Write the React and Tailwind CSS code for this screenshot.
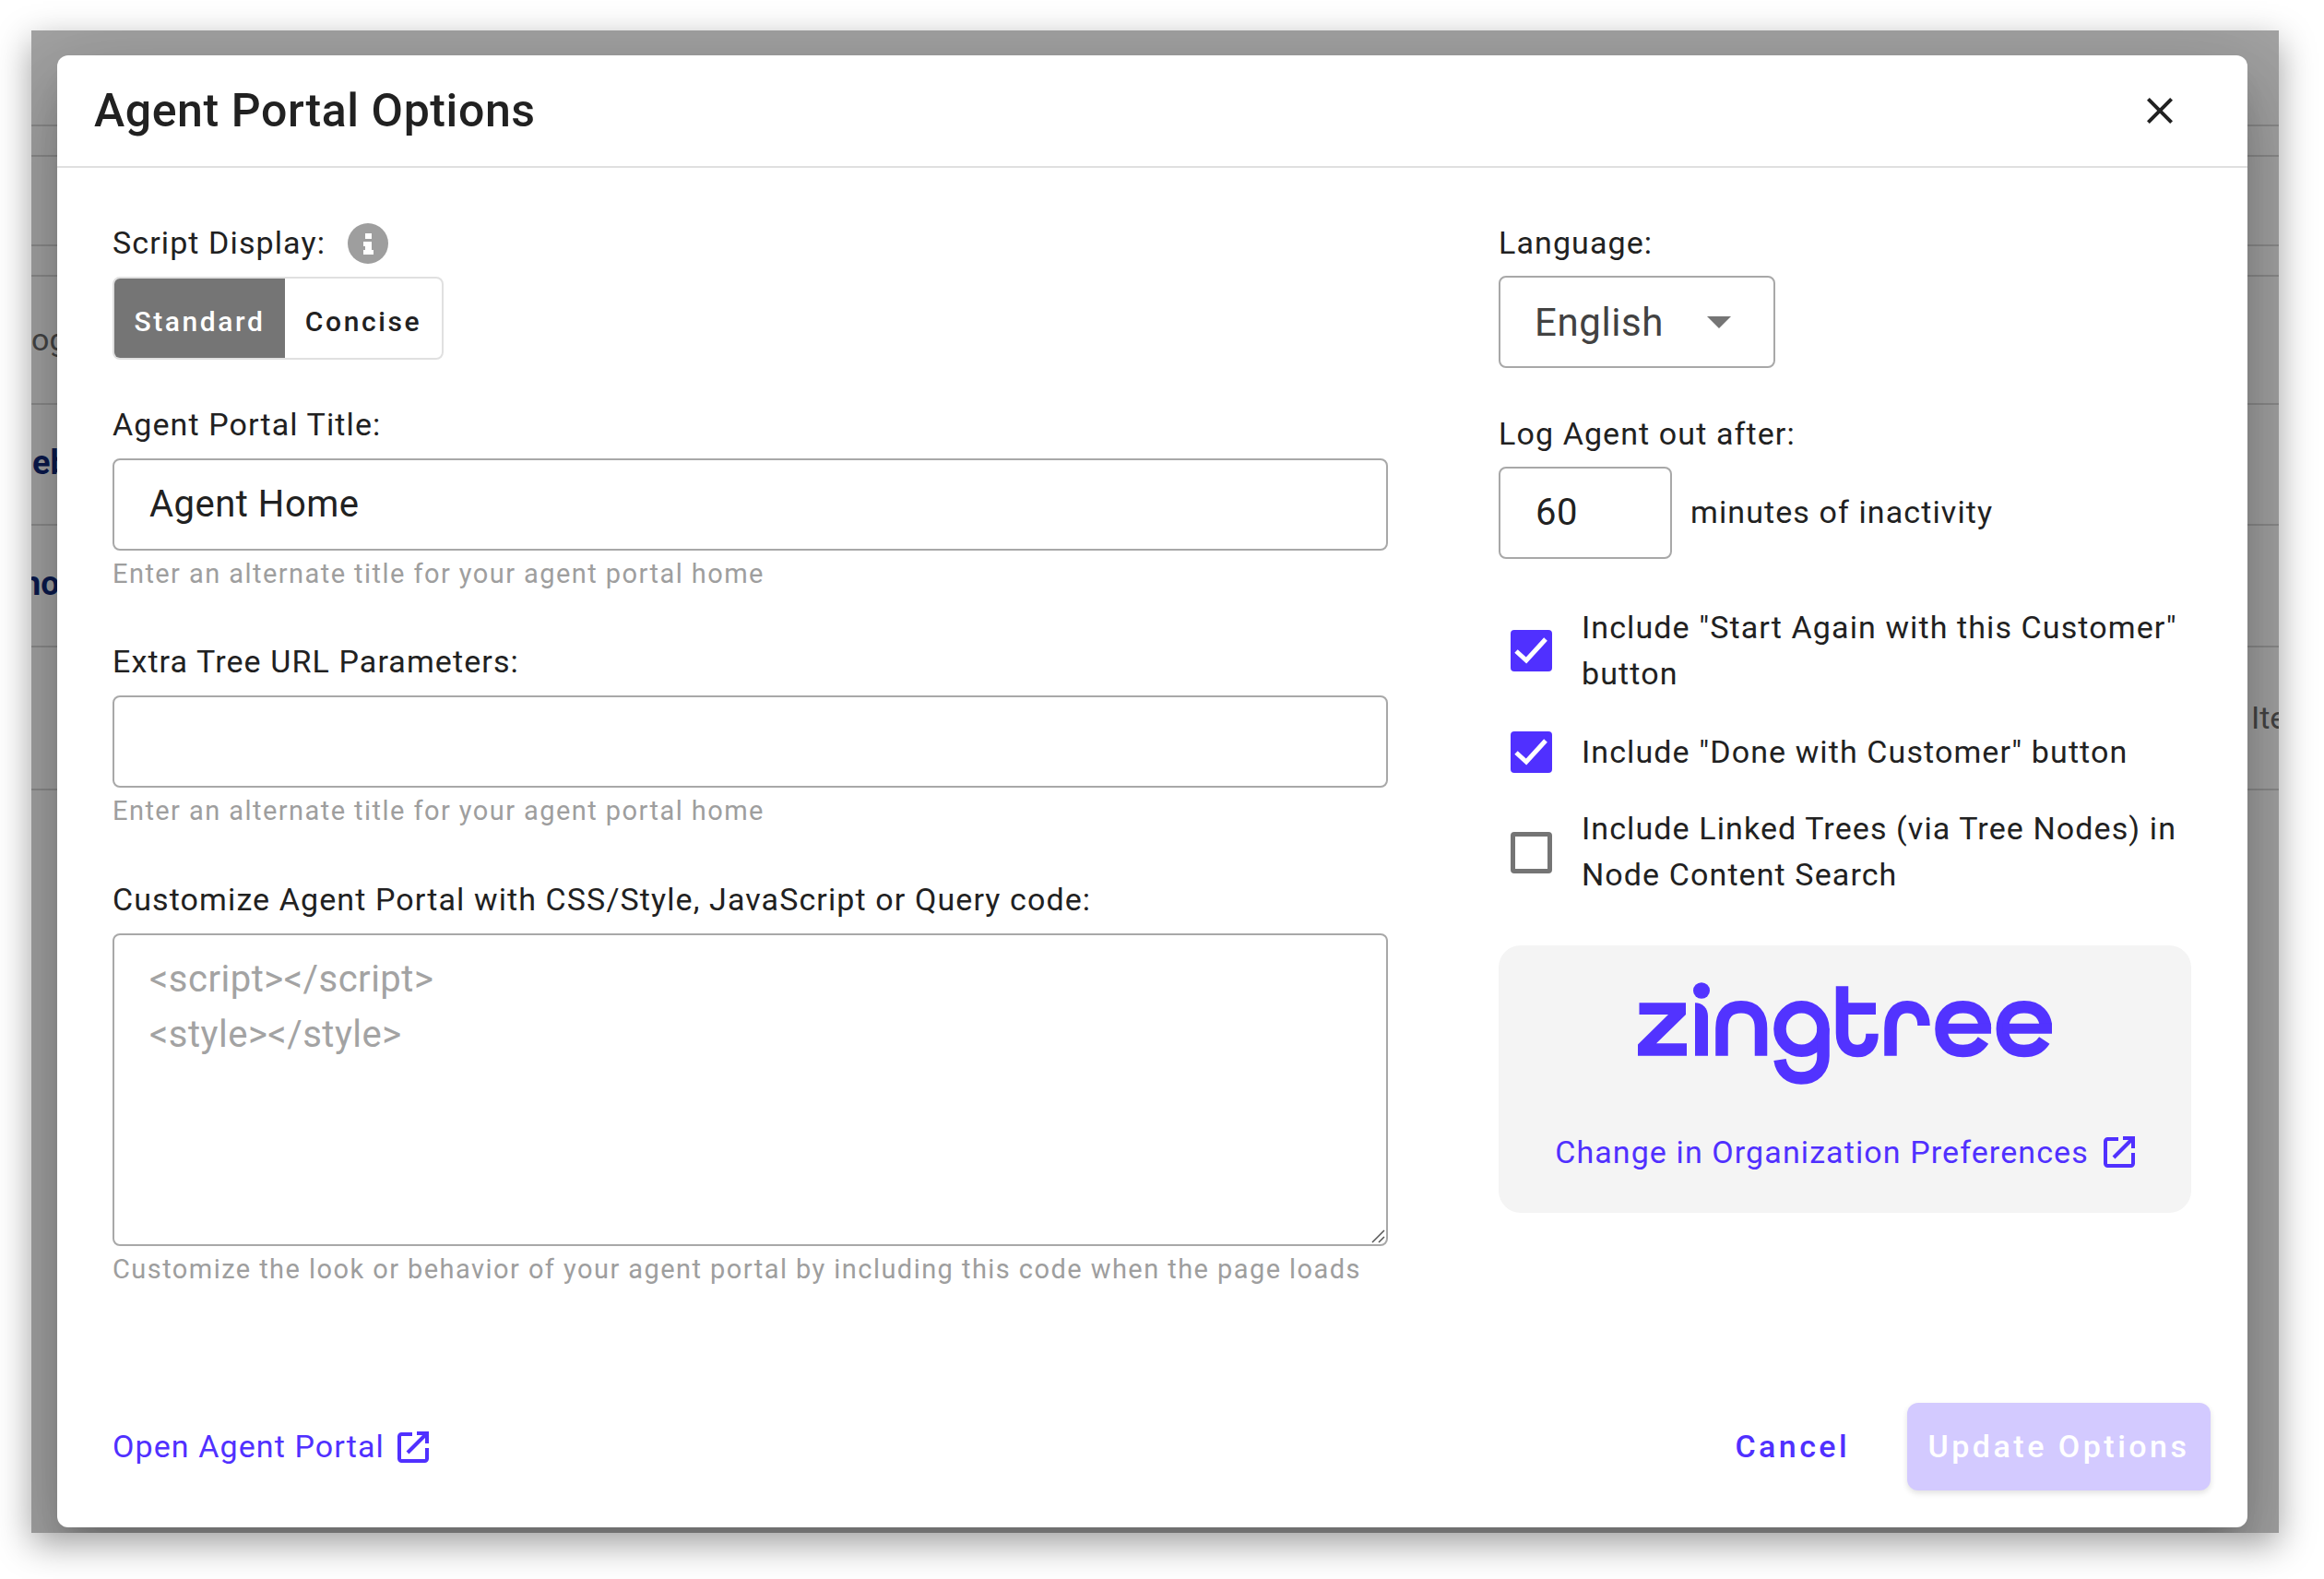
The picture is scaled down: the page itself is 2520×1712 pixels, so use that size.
import React from "react";

const ExternalIcon = () => (
  <svg width="34" height="34" viewBox="0 0 34 34" fill="none" stroke="#5030ff" strokeWidth="4" className="shrink-0">
    <path d="M16 3H4.500A2.500 2.500 0 0 0 2 5.500V29.500A2.500 2.500 0 0 0 4.500 32H29.500A2.500 2.500 0 0 0 32 29.500V18" />
    <path d="M11 23L31 3" />
    <path d="M21 2H32V13" />
  </svg>
);

const Check = ({ checked }) =>
  checked ? (
    <div className="w-[45px] h-[45px] rounded-[4px] bg-[#5030ff] flex items-center justify-center shrink-0">
      <svg width="45" height="45" viewBox="0 0 45 45" fill="none" stroke="#fff" strokeWidth="5">
        <path d="M6 23L17 33L38 10" />
      </svg>
    </div>
  ) : (
    <div className="w-[45px] h-[45px] mt-[2px] rounded-[4px] border-[5px] border-[#757575] bg-white shrink-0" />
  );

const Logo = () => (
  <svg width="449" height="111" viewBox="0 0 449 111" fill="none" stroke="#5233ff" strokeWidth="13.500">
    <path stroke="none" fill="#5233ff" d="M1.500 22.300H52V35L20 66.300H53V79.700H0V67.500L33 35H1.500Z" />
    <ellipse stroke="none" fill="#5233ff" cx="69" cy="9" rx="9" ry="8.800" />
    <path stroke="none" fill="#5233ff" d="M62 22.300C70 22.300 76 28 76 37V79.700H62Z" />
    <path d="M91 79.700V50C91 35 98 26.700 112 26.700C126 26.700 133.500 35 133.500 50V79.700" />
    <ellipse cx="177.500" cy="50.500" rx="23.500" ry="23.800" />
    <path d="M154 84C156 97 165 104 177 104C192 104 201 94 201 80V50" />
    <path d="M221.500 4.300V55C221.500 68 228 74.500 238 74.500C248 74.500 254 68 254 55.700" />
    <path stroke="none" fill="#5233ff" d="M221 22.300H258V35H221Z" />
    <path d="M274 79.700V50C274 34 282 26.700 292 26.700C303 26.700 310 34 310 47" />
    <path d="M329 50.500C329 36 338 26.700 352.500 26.700C367 26.700 376 36 376.500 50.500M329 50.500C329 65 338 74.500 352.500 74.500C362 74.500 370 70 374.500 63" />
    <path strokeWidth="11" d="M329 50.200H383" />
    <path d="M395.300 50.500C395.300 36 404.300 26.700 418.800 26.700C433.300 26.700 442.300 36 442.800 50.500M395.300 50.500C395.300 65 404.300 74.500 418.800 74.500C428.300 74.500 436.300 70 440.800 63" />
    <path strokeWidth="11" d="M395.300 50.200H449" />
  </svg>
);

const Label = ({ children }) => (
  <div className="h-[50px] leading-[48px] text-[34px] tracking-[1.1px] text-[#212121] whitespace-nowrap">{children}</div>
);
const Helper = ({ children }) => (
  <div className="h-[40px] leading-[40px] mt-[5px] text-[29px] tracking-[1.44px] text-[#9e9e9e] whitespace-nowrap">{children}</div>
);
const Field = ({ value, gap }) => (
  <div className={`${gap} h-[100px] w-full rounded-[8px] border-2 border-[#a8a8a8] px-[38px] flex items-center text-[40px] tracking-[0.5px] text-[#212121]`}>
    {value}
  </div>
);

const lines = ["top-[102px]", "top-[135px]", "top-[232px]", "top-[265px]", "top-[404px]", "top-[535px]", "top-[667px]", "top-[822px]"];

export default function App() {
  return (
    <div className="w-[2520px] h-[1712px] bg-white pl-[34px] pt-[33px] font-['Roboto',sans-serif] overflow-hidden">
      <div className="relative w-[2437px] h-[1629px] bg-[#a2a2a2] overflow-hidden shadow-[0_12px_36px_rgba(0,0,0,0.38)]">
        {lines.map((l) => (
          <div key={l} className={`absolute left-0 right-0 h-[2px] bg-[#8a8a8a] ${l}`} />
        ))}
        <div className="absolute left-0 top-[310px] text-[34px] leading-[50px] text-[#444444]">og</div>
        <div className="absolute left-[1px] top-[444px] text-[36px] leading-[50px] font-bold text-[#0b1a4d]">eb</div>
        <div className="absolute left-[-10px] top-[575px] text-[36px] leading-[50px] font-bold text-[#0b1a4d]">no</div>
        <div className="absolute left-[2407px] top-[720px] text-[34px] leading-[50px] text-[#444444]">Ite</div>

        <div className="absolute left-[28px] top-[27px] w-[2375px] h-[1596px] rounded-[12px] bg-white flex flex-col text-[#212121] shadow-[0_22px_30px_-14px_rgba(0,0,0,0.2),0_48px_76px_6px_rgba(0,0,0,0.14),0_18px_92px_16px_rgba(0,0,0,0.12)]">
          <div className="h-[122px] shrink-0 border-b-2 border-[#e0e0e0] flex items-center justify-between pl-[40px] pr-[71px]">
            <div className="text-[50px] font-medium tracking-[0.6px] text-[#212121]">Agent Portal Options</div>
            <svg width="48" height="48" viewBox="0 0 24 24" fill="#212121">
              <path d="M19 6.410 17.590 5 12 10.590 6.410 5 5 6.410 10.590 12 5 17.590 6.410 19 12 13.410 17.590 19 19 17.590 13.410 12z" />
            </svg>
          </div>

          <div className="flex pl-[60px] pt-[57px] gap-[120px]">
            <div className="w-[1383px] shrink-0">
              <div className="flex items-center gap-[24px] h-[50px]">
                <Label>Script Display:</Label>
                <svg width="44" height="44" viewBox="0 0 44 44">
                  <circle cx="22" cy="22" r="22" fill="#9e9e9e" />
                  <rect x="19" y="11" width="7" height="6" fill="#fff" />
                  <path d="M17 20H26V29H28V34H17V29H19V25H17Z" fill="#fff" />
                </svg>
              </div>
              <div className="mt-[11px] w-[359px] h-[90px] rounded-[8px] border-2 border-[#e0e0e0] flex overflow-hidden text-[30px] font-medium tracking-[2.6px]">
                <div className="w-[185px] pt-[7px] bg-[#757575] text-white flex items-center justify-center">Standard</div>
                <div className="flex-1 pt-[7px] text-[#212121] flex items-center justify-center">Concise</div>
              </div>

              <div className="mt-[46px]"><Label>Agent Portal Title:</Label></div>
              <Field value="Agent Home" gap="mt-[11px]" />
              <Helper>Enter an alternate title for your agent portal home</Helper>

              <div className="mt-[51px]"><Label>Extra Tree URL Parameters:</Label></div>
              <Field value="" gap="mt-[11px]" />
              <Helper>Enter an alternate title for your agent portal home</Helper>

              <div className="mt-[52px]"><Label>Customize Agent Portal with CSS/Style, JavaScript or Query code:</Label></div>
              <div className="relative mt-[11px] h-[339px] w-full rounded-[8px] border-2 border-[#a8a8a8] px-[38px] pt-[18px] text-[40px] leading-[60px] tracking-[0.5px] text-[#a3a3a3]">
                <div>{"<script></script>"}</div>
                <div>{"<style></style>"}</div>
                <svg width="16" height="16" viewBox="0 0 16 16" stroke="#555" strokeWidth="1.500" className="absolute right-[1px] bottom-[1px]">
                  <path d="M2 15L15 2M9 15L15 9" />
                </svg>
              </div>
              <Helper>Customize the look or behavior of your agent portal by including this code when the page loads</Helper>
            </div>

            <div className="w-[751px] shrink-0">
              <Label>Language:</Label>
              <div className="mt-[10px] w-[300px] h-[100px] rounded-[8px] border-2 border-[#a8a8a8] pl-[37px] pr-[46px] flex items-center justify-between text-[42px] tracking-[0.6px] text-[#424242]">
                <span>English</span>
                <svg width="26" height="13" viewBox="0 0 26 13" fill="#757575"><path d="M0 0H26L13 13Z" /></svg>
              </div>
              <div className="mt-[47px]"><Label>Log Agent out after:</Label></div>
              <div className="mt-[10px] flex items-center gap-[20px]">
                <div className="w-[188px] h-[100px] rounded-[8px] border-2 border-[#a8a8a8] pl-[38px] flex items-center text-[40px] tracking-[0.5px] text-[#212121]">60</div>
                <Label>minutes of inactivity</Label>
              </div>

              <div className="mt-[49px] flex items-center pl-[13px] gap-[32px]">
                <Check checked />
                <div className="text-[34px] leading-[50px] tracking-[1.1px]">Include "Start Again with this Customer"<br />button</div>
              </div>
              <div className="mt-[35px] flex items-center pl-[13px] gap-[32px]">
                <Check checked />
                <div className="text-[34px] leading-[50px] tracking-[1.1px]">Include "Done with Customer" button</div>
              </div>
              <div className="mt-[33px] flex items-center pl-[13px] gap-[32px]">
                <Check />
                <div className="text-[34px] leading-[50px] tracking-[1.1px]">Include Linked Trees (via Tree Nodes) in<br />Node Content Search</div>
              </div>

              <div className="mt-[52px] h-[290px] rounded-[24px] bg-[#f4f4f4] pt-[40px] flex flex-col items-center">
                <Logo />
                <div className="mt-[48px] flex items-center gap-[16px] text-[34px] leading-[50px] tracking-[1.1px] text-[#5030ff]">
                  <span>Change in Organization Preferences</span>
                  <ExternalIcon />
                </div>
              </div>
            </div>
          </div>

          <div className="mt-auto pb-[40px] pl-[60px] pr-[40px] flex items-center justify-between">
            <div className="flex items-center gap-[14px] text-[34px] tracking-[1.1px] text-[#5030ff]">
              <span>Open Agent Portal</span>
              <ExternalIcon />
            </div>
            <div className="flex items-center gap-[62px]">
              <div className="text-[34px] font-medium tracking-[3.4px] text-[#5030ff]">Cancel</div>
              <div className="w-[329px] h-[95px] rounded-[12px] bg-[#d3caff] flex items-center justify-center text-[34px] font-medium tracking-[3.5px] text-white shadow-[0_3px_6px_rgba(0,0,0,0.12)]">Update Options</div>
            </div>
          </div>
        </div>
      </div>
    </div>
  );
}
